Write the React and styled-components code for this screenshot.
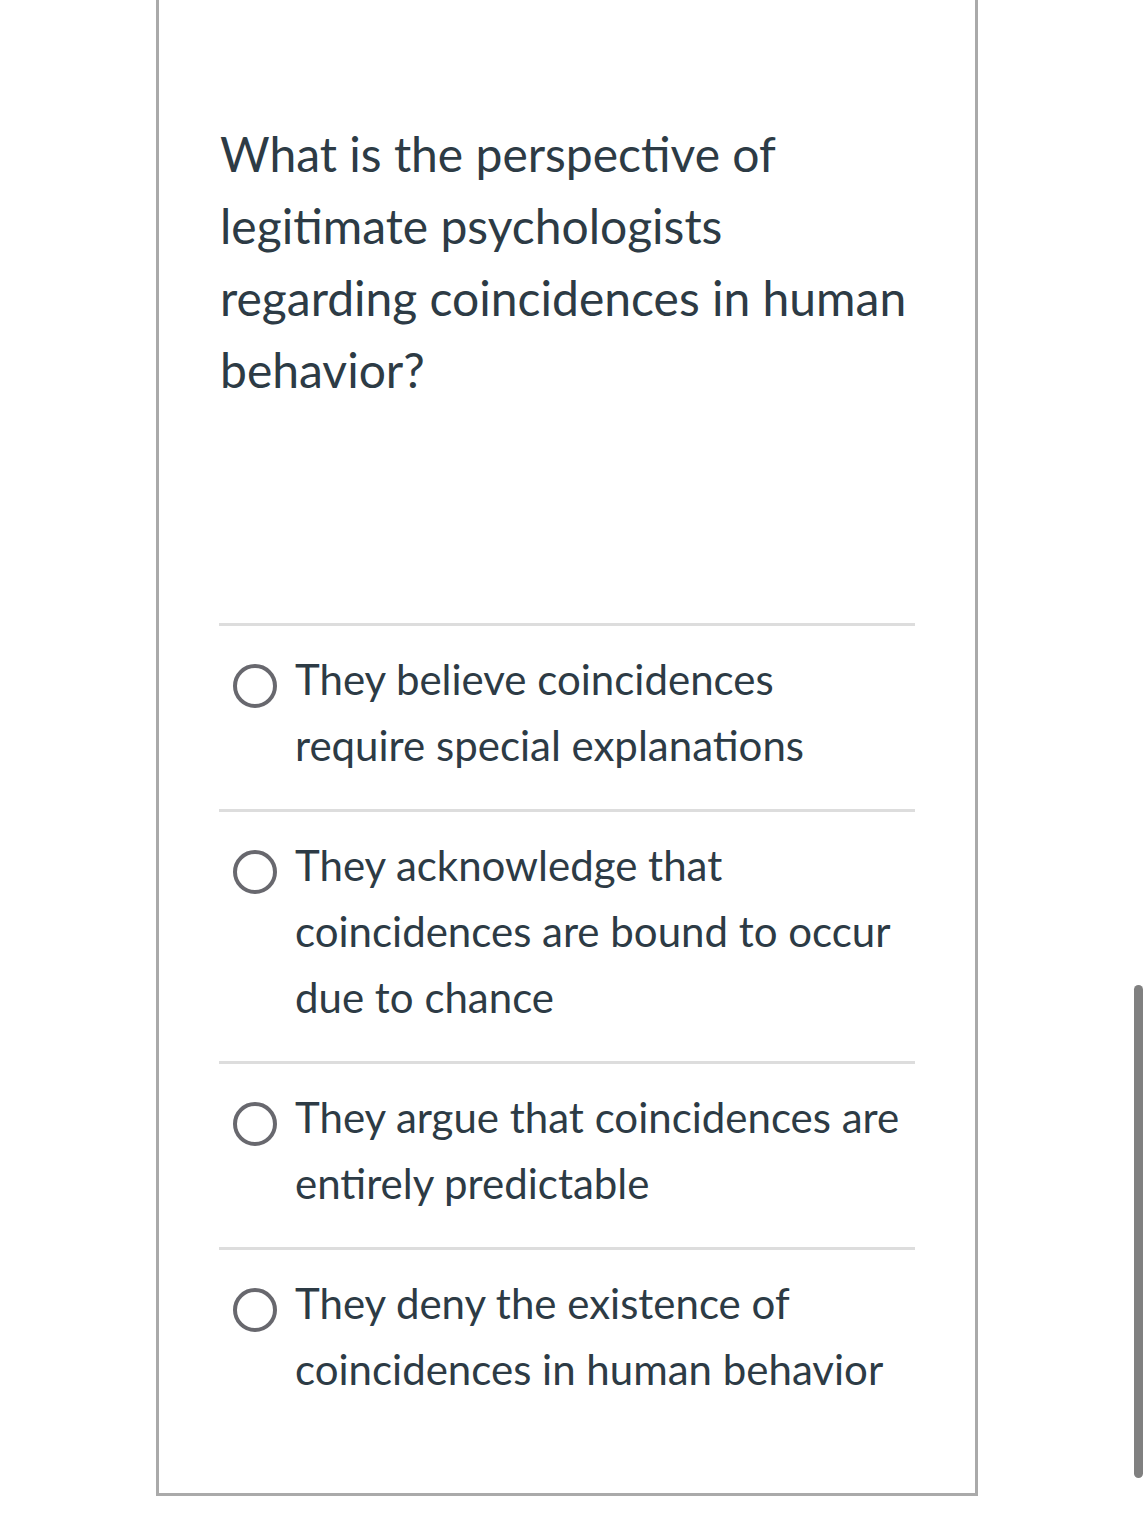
import React from "react";
import styled, { createGlobalStyle } from "styled-components";

const Global = createGlobalStyle`
  html, body { margin: 0; padding: 0; background: #fff; }
  body { font-family: Lato, "Noto Sans", sans-serif; color: #2d3b45; }
`;

const Page = styled.div`
  position: relative;
  width: 1148px;
  min-height: 1531px;
  padding-left: 156px;
  box-sizing: border-box;
`;

const Card = styled.div`
  width: 822px;
  box-sizing: border-box;
  border: 3px solid #aaaaaa;
  border-top: none;
  padding: 118px 60px 60px 60px;
`;

const Question = styled.div`
  font-size: 48px;
  line-height: 72px;
  padding-left: 1px;
  margin-bottom: 217px;
`;

const Options = styled.div`
  display: flex;
  flex-direction: column;
`;

const Option = styled.label`
  display: flex;
  align-items: flex-start;
  border-top: 3px solid #dddddd;
  padding: 20px 10px 31px 14px;
`;

const Radio = styled.span`
  flex: none;
  width: 44px;
  height: 44px;
  box-sizing: border-box;
  border: 4px solid #68686e;
  border-radius: 50%;
  margin-top: 18px;
  margin-right: 18px;
`;

const OptionText = styled.span`
  font-size: 42px;
  line-height: 66px;
`;

const Scrollbar = styled.div`
  position: absolute;
  left: 1134px;
  top: 985px;
  width: 9px;
  height: 493px;
  border-radius: 5px;
  background: #808080;
`;

const answers = [
  "They believe coincidences require special explanations",
  "They acknowledge that coincidences are bound to occur due to chance",
  "They argue that coincidences are entirely predictable",
  "They deny the existence of coincidences in human behavior",
];

export default function App() {
  return (
    <Page>
      <Global />
      <Card>
        <Question>
          What is the perspective of legitimate psychologists regarding
          coincidences in human behavior?
        </Question>
        <Options>
          {answers.map((a) => (
            <Option key={a}>
              <Radio />
              <OptionText>{a}</OptionText>
            </Option>
          ))}
        </Options>
      </Card>
      <Scrollbar />
    </Page>
  );
}
